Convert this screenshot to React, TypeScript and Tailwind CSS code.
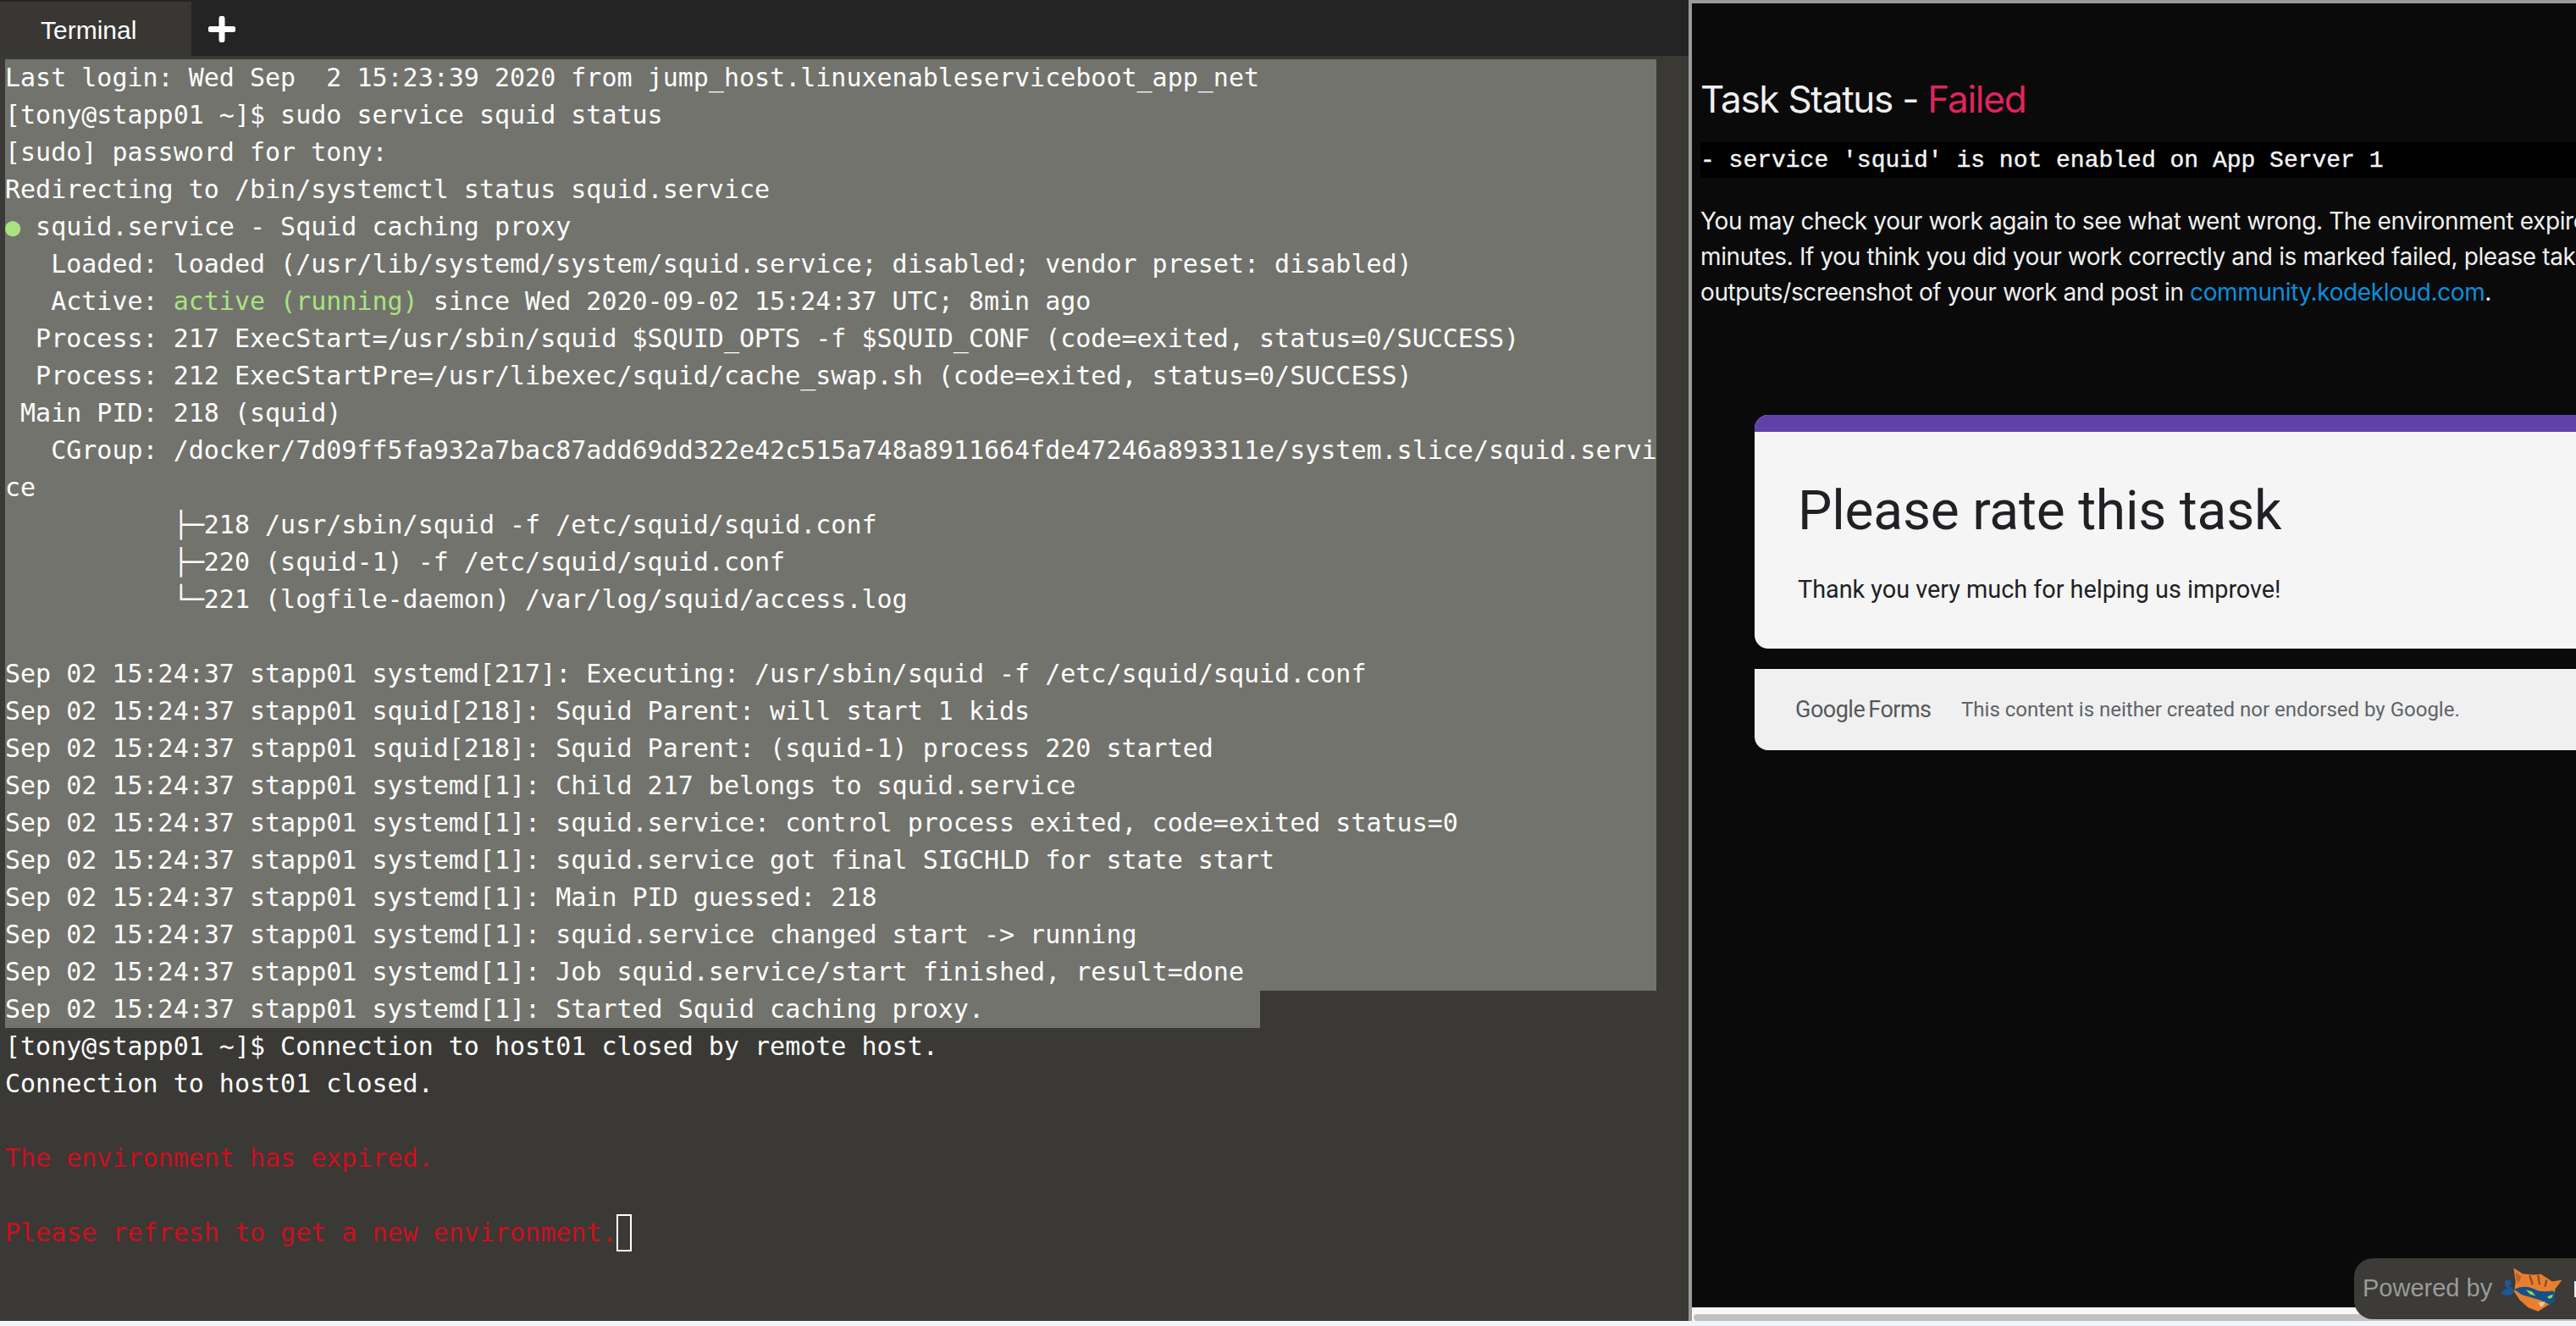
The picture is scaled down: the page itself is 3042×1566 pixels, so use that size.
const mono = { fontFamily: '"DejaVu Sans Mono", monospace' }

const selected: React.ReactNode[] = [
  "Last login: Wed Sep  2 15:23:39 2020 from jump_host.linuxenableserviceboot_app_net",
  "[tony@stapp01 ~]$ sudo service squid status",
  "[sudo] password for tony:",
  "Redirecting to /bin/systemctl status squid.service",
  <><span className="text-[#a9e37f]">●</span> squid.service - Squid caching proxy</>,
  "   Loaded: loaded (/usr/lib/systemd/system/squid.service; disabled; vendor preset: disabled)",
  <>   Active: <span className="text-[#a9e37f]">active (running)</span> since Wed 2020-09-02 15:24:37 UTC; 8min ago</>,
  "  Process: 217 ExecStart=/usr/sbin/squid $SQUID_OPTS -f $SQUID_CONF (code=exited, status=0/SUCCESS)",
  "  Process: 212 ExecStartPre=/usr/libexec/squid/cache_swap.sh (code=exited, status=0/SUCCESS)",
  " Main PID: 218 (squid)",
  "   CGroup: /docker/7d09ff5fa932a7bac87add69dd322e42c515a748a8911664fde47246a893311e/system.slice/squid.servi",
  "ce",
  "           ├─218 /usr/sbin/squid -f /etc/squid/squid.conf",
  "           ├─220 (squid-1) -f /etc/squid/squid.conf",
  "           └─221 (logfile-daemon) /var/log/squid/access.log",
  " ",
  "Sep 02 15:24:37 stapp01 systemd[217]: Executing: /usr/sbin/squid -f /etc/squid/squid.conf",
  "Sep 02 15:24:37 stapp01 squid[218]: Squid Parent: will start 1 kids",
  "Sep 02 15:24:37 stapp01 squid[218]: Squid Parent: (squid-1) process 220 started",
  "Sep 02 15:24:37 stapp01 systemd[1]: Child 217 belongs to squid.service",
  "Sep 02 15:24:37 stapp01 systemd[1]: squid.service: control process exited, code=exited status=0",
  "Sep 02 15:24:37 stapp01 systemd[1]: squid.service got final SIGCHLD for state start",
  "Sep 02 15:24:37 stapp01 systemd[1]: Main PID guessed: 218",
  "Sep 02 15:24:37 stapp01 systemd[1]: squid.service changed start -> running",
  "Sep 02 15:24:37 stapp01 systemd[1]: Job squid.service/start finished, result=done",
]

// ninja cat logo, coordinates traced from the badge at 3x
function Cat() {
  return (
    <svg className="shrink-0" width="80" height="57" viewBox="20 20 240 170">
      <path d="M48 72l20 3 2 12-12 6 14 6 8 14-10 12-20 2-18-6 14-14 14-4-10-6-2-12z" fill="#1a5a9c" />
      <path d="M78 30l32 20 40 4 25-2 40 26 35-6-25 32-3 44-27 16-30 20-35-14-30-26-20-30 5-35z" fill="#e97f2e" />
      <path d="M85 45l20 15-10 25-7-14z" fill="#b8642c" />
      <path d="M135 55l10 34M165 55l5 34M195 72l-6 24" stroke="#8a4f1e" strokeWidth="7" fill="none" />
      <path d="M80 106c25-14 55-12 80 3 15 6 35 4 55 2 8 2 12 8 10 18l-2 22-20 7-30-14-30-9-35-10z" fill="#14508a" />
      <path d="M121 107l22 6 13 16-20-6z" fill="#9fcf4a" />
      <path d="M197 131l21-8-4 13-11 3z" fill="#9fcf4a" />
      <path d="M165 152l25-3-6 14-10 5z" fill="#e9c5a5" />
    </svg>
  )
}

export default function App() {
  return (
    <div className="w-[3042px] h-[1566px] overflow-hidden bg-[#f1f5f9] relative">
      <div className="flex h-[1560px]">
        {/* terminal side */}
        <div className="w-[1994px] shrink-0 flex flex-col bg-[#3a3935]">
          <div className="h-[66px] shrink-0 bg-[#242424] flex items-end">
            <div className="w-[226px] h-[64px] bg-[#383734] flex items-center pl-[48px] pt-[2px] text-white text-[30px]" style={{ fontFamily: '"Liberation Sans", sans-serif' }}>
              Terminal
            </div>
            <svg className="ml-[20px] mb-[16px]" width="32" height="31" viewBox="0 0 32 31">
              <path d="M16 3v25M3 15.5h26" stroke="#fff" strokeWidth="7" strokeLinecap="round" />
            </svg>
          </div>
          <div className="mt-[4px] pl-[6px] text-white text-[30px] leading-[44px] whitespace-pre overflow-hidden" style={mono}>
            {selected.map((line, i) => (
              <div key={i} className="h-[44px] w-[1950px] bg-[#72736d] overflow-hidden">{line}</div>
            ))}
            <div className="h-[44px] w-[1482px] bg-[#72736d]">Sep 02 15:24:37 stapp01 systemd[1]: Started Squid caching proxy.</div>
            <div className="h-[44px]">[tony@stapp01 ~]$ Connection to host01 closed by remote host.</div>
            <div className="h-[44px]">Connection to host01 closed.</div>
            <div className="h-[44px]"> </div>
            <div className="h-[44px] text-[#cc0f1f]">The environment has expired.</div>
            <div className="h-[44px]"> </div>
            <div className="h-[44px] text-[#cc0f1f] flex">
              Please refresh to get a new environment.
              <span className="w-[18px] h-[44px] border-2 border-white" />
            </div>
          </div>
        </div>

        {/* task status side */}
        <div className="w-[1048px] shrink-0 border-l-4 border-t-4 border-[#9a9a9a] bg-white flex flex-col overflow-hidden">
          <div className="h-[1540px] shrink-0 bg-[#0a0a0a] overflow-hidden pl-[10px] whitespace-nowrap" style={{ fontFamily: 'Inter, sans-serif' }}>
            <div className="mt-[88px] h-[50px] text-[44px] leading-[50px] text-[#f0f0f0] tracking-[-1.25px]">
              Task Status - <span className="text-[#e0245e]">Failed</span>
            </div>
            <div className="mt-[26px] h-[42px] bg-black text-[#f5f5f5] text-[28px] leading-[44px] [-webkit-text-stroke:0.4px_#f5f5f5]" style={{ fontFamily: '"Liberation Mono", monospace' }}>
              - service 'squid' is not enabled on App Server 1
            </div>
            <div className="mt-[30px] text-[28px] leading-[42px] text-[#f0f0f0] tracking-[-0.38px]">
              <div>You may check your work again to see what went wrong. The environment expires in 60</div>
              <div>minutes. If you think you did your work correctly and is marked failed, please take a screenshot of</div>
              <div>outputs/screenshot of your work and post in <span className="text-[#0b8fdc]">community.kodekloud.com</span>.</div>
            </div>
            <div className="mt-[124px] ml-[64px] w-[1100px]" style={{ fontFamily: 'Roboto, sans-serif' }}>
              <div className="h-[276px] rounded-[16px] overflow-hidden bg-[#f5f5f5]">
                <div className="h-[20px] bg-[#6041a8]" />
                <div className="pl-[51px] pt-[56px] text-[64px] leading-[76px] text-[#202124] tracking-[-0.2px]">Please rate this task</div>
                <div className="pl-[51px] pt-[34px] text-[28.8px] leading-[40px] text-[#202124]">Thank you very much for helping us improve!</div>
              </div>
              <div className="mt-[24px] h-[96px] rounded-b-[16px] bg-[#f0f0f0] flex items-center pl-[48px] text-[#5f6368]">
                <span className="w-[196px] flex gap-[4px] text-[27px] text-[#55585c]">
                  <span className="tracking-[-0.5px]">Google</span>
                  <span className="tracking-[-0.5px]">Forms</span>
                </span>
                <span className="text-[24px]">This content is neither created nor endorsed by Google.</span>
              </div>
            </div>
          </div>
          <div className="h-[8px] bg-[#f8f8f8]" />
          <div className="h-[8px] pl-[2px] bg-[#f8f8f8]">
            <div className="h-[8px] rounded-l-[8px] bg-[#c1c1c1]" />
          </div>
        </div>
      </div>

      {/* widget over the corner */}
      <div className="absolute left-[2780px] top-[1486px] w-[262px] h-[72px] rounded-l-[22px] bg-[#3c3b37] flex items-center pl-[10px] text-[#9a9a9a] text-[29px]" style={{ fontFamily: '"Liberation Sans", sans-serif' }}>
        Powered by
        <span className="ml-[6px]"><Cat /></span>
        <span className="ml-auto w-[2px] h-[19px] bg-[#eeeeee]" />
      </div>
    </div>
  )
}
